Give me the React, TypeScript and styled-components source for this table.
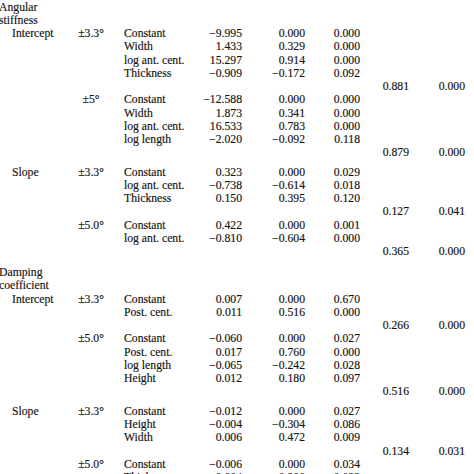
import React from 'react'
import styled, { createGlobalStyle } from 'styled-components'

const GlobalStyle = createGlobalStyle`
  html, body {
    margin: 0;
    padding: 0;
    background: #ffffff;
    overflow: hidden;
  }
`

const ROW_HEIGHT = 13.27

const Page = styled.div`
  width: 474px;
  height: 474px;
  overflow: hidden;
  background: #ffffff;
  color: #121212;
  font-family: 'Liberation Serif', 'Times New Roman', serif;
  font-size: 11.7px;
  -webkit-text-stroke: 0.15px #121212;
`

const Table = styled.div`
  display: flex;
  flex-direction: column;
  margin: 0.5px 0 0 -1px;
`

const Row = styled.div`
  display: grid;
  grid-template-columns: 71px 42px 88px 42px 63px 55px 49px 56px;
  height: ${ROW_HEIGHT}px;
  line-height: ${ROW_HEIGHT}px;
  white-space: nowrap;
`

const Title = styled.div`
  grid-column: 1 / span 3;
`

const BlockName = styled.div<{ $indent?: number }>`
  padding-left: ${({ $indent = 13 }) => $indent}px;
`

const Angle = styled.div`
  text-align: center;
`

const Term = styled.div`
  padding-left: 12px;
`

const Num = styled.div`
  text-align: right;
`

const Spacer = styled.div<{ $h: number }>`
  height: ${({ $h }) => $h}px;
  flex: none;
`

type Term = [string, string, string, string]
type Fit = { angle: string; terms: Term[]; r2?: [string, string] }
type Block = { name: string; fits: Fit[] }
type Group = { title: string[]; blocks: Block[] }

const M = '\u2212'

const groups: Group[] = [
  {
    title: ['Angular', 'stiffness'],
    blocks: [
      {
        name: 'Intercept',
        fits: [
          {
            angle: '±3.3°',
            terms: [
              ['Constant', `${M}9.995`, '0.000', '0.000'],
              ['Width', '1.433', '0.329', '0.000'],
              ['log ant. cent.', '15.297', '0.914', '0.000'],
              ['Thickness', `${M}0.909`, `${M}0.172`, '0.092'],
            ],
            r2: ['0.881', '0.000'],
          },
          {
            angle: '±5°',
            terms: [
              ['Constant', `${M}12.588`, '0.000', '0.000'],
              ['Width', '1.873', '0.341', '0.000'],
              ['log ant. cent.', '16.533', '0.783', '0.000'],
              ['log length', `${M}2.020`, `${M}0.092`, '0.118'],
            ],
            r2: ['0.879', '0.000'],
          },
        ],
      },
      {
        name: 'Slope',
        fits: [
          {
            angle: '±3.3°',
            terms: [
              ['Constant', '0.323', '0.000', '0.029'],
              ['log ant. cent.', `${M}0.738`, `${M}0.614`, '0.018'],
              ['Thickness', '0.150', '0.395', '0.120'],
            ],
            r2: ['0.127', '0.041'],
          },
          {
            angle: '±5.0°',
            terms: [
              ['Constant', '0.422', '0.000', '0.001'],
              ['log ant. cent.', `${M}0.810`, `${M}0.604`, '0.000'],
            ],
            r2: ['0.365', '0.000'],
          },
        ],
      },
    ],
  },
  {
    title: ['Damping', 'coefficient'],
    blocks: [
      {
        name: 'Intercept',
        fits: [
          {
            angle: '±3.3°',
            terms: [
              ['Constant', '0.007', '0.000', '0.670'],
              ['Post. cent.', '0.011', '0.516', '0.000'],
            ],
            r2: ['0.266', '0.000'],
          },
          {
            angle: '±5.0°',
            terms: [
              ['Constant', `${M}0.060`, '0.000', '0.027'],
              ['Post. cent.', '0.017', '0.760', '0.000'],
              ['log length', `${M}0.065`, `${M}0.242`, '0.028'],
              ['Height', '0.012', '0.180', '0.097'],
            ],
            r2: ['0.516', '0.000'],
          },
        ],
      },
      {
        name: 'Slope',
        fits: [
          {
            angle: '±3.3°',
            terms: [
              ['Constant', `${M}0.012`, '0.000', '0.027'],
              ['Height', `${M}0.004`, `${M}0.304`, '0.086'],
              ['Width', '0.006', '0.472', '0.009'],
            ],
            r2: ['0.134', '0.031'],
          },
          {
            angle: '±5.0°',
            terms: [
              ['Constant', `${M}0.006`, '0.000', '0.034'],
              ['Thickness', '0.004', '0.200', '0.022'],
            ],
          },
        ],
      },
    ],
  },
]

const FitRows = ({ fit, blockName }: { fit: Fit; blockName?: string }) => (
  <>
    {fit.terms.map((t, i) => (
      <Row key={i}>
        <BlockName>{i === 0 ? blockName : ''}</BlockName>
        <Angle>{i === 0 ? fit.angle : ''}</Angle>
        <Term>{t[0]}</Term>
        <Num>{t[1]}</Num>
        <Num>{t[2]}</Num>
        <Num>{t[3]}</Num>
        <div />
        <div />
      </Row>
    ))}
    {fit.r2 && (
      <Row>
        <div />
        <div />
        <div />
        <div />
        <div />
        <div />
        <Num>{fit.r2[0]}</Num>
        <Num>{fit.r2[1]}</Num>
      </Row>
    )}
  </>
)

export default function App() {
  return (
    <Page>
      <GlobalStyle />
      <Table>
        {groups.map((g, gi) => (
          <React.Fragment key={gi}>
            {gi > 0 && <Spacer $h={7.5} />}
            {g.title.map((line) => (
              <Row key={line}>
                <Title>{line}</Title>
              </Row>
            ))}
            {g.blocks.map((b, bi) => (
              <React.Fragment key={bi}>
                {bi > 0 && <Spacer $h={6} />}
                {b.fits.map((f, fi) => (
                  <FitRows key={fi} fit={f} blockName={fi === 0 ? b.name : undefined} />
                ))}
              </React.Fragment>
            ))}
          </React.Fragment>
        ))}
      </Table>
    </Page>
  )
}
